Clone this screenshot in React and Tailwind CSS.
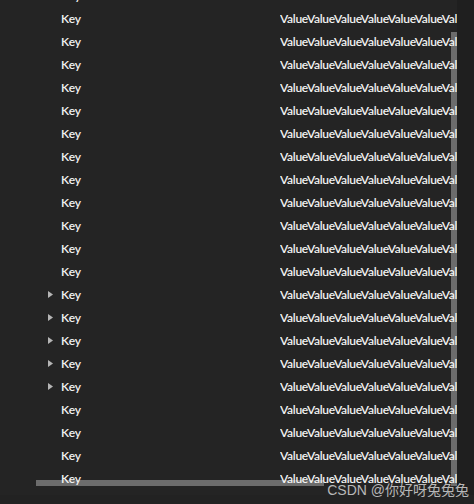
const rows = Array.from({ length: 23 }, (_, i) => ({
  id: i,
  expandable: i >= 13 && i <= 17,
}));

const Row = ({ row }) => (
  <div className="flex items-center h-[23px] shrink-0">
    <div className="w-[48px] shrink-0" />
    <div className="w-[13px] shrink-0 flex items-center">
      {row.expandable && (
        <svg width="5" height="7" viewBox="0 0 5 7">
          <path d="M0 0 L5 3.5 L0 7 Z" fill="#b5b5b5" />
        </svg>
      )}
    </div>
    <div className="w-[219px] shrink-0 text-[#f2f2f2]">Key</div>
    <div className="flex-1 overflow-hidden whitespace-nowrap text-[#f2f2f2] tracking-[-0.3px]">
      ValueValueValueValueValueValueValueValue
    </div>
  </div>
);

export default function App() {
  return (
    <div
      className="relative w-[474px] h-[504px] overflow-hidden bg-[#242424] flex"
      style={{ fontFamily: 'Lato, "Noto Sans CJK SC", sans-serif' }}
    >
      {/* scrollbars sit under the rows */}
      <div className="absolute left-[451px] top-[32px] w-[6px] h-[454px] bg-[#6c6c6c]" />
      <div className="absolute left-[36px] top-[480px] w-[288px] h-[6px] bg-[#6c6c6c]" />
      <div className="absolute left-0 bottom-0 w-full h-[9px] bg-[#222222]" />

      <div className="relative w-[457px] h-[492px] overflow-hidden text-[12px] font-semibold">
        <div className="flex flex-col -mt-[16px]">
          {rows.map((row) => (
            <Row key={row.id} row={row} />
          ))}
        </div>
      </div>
      <div className="flex-1 bg-[#1f1f1f]" />

      <div
        className="absolute right-[5px] top-[480px] h-[20px] flex items-center text-[14px] text-[#b8b8b8] whitespace-nowrap"
        style={{ fontFamily: '"Liberation Sans", "Noto Sans CJK SC", sans-serif' }}
      >
        CSDN @你好呀兔兔兔
      </div>
    </div>
  );
}
